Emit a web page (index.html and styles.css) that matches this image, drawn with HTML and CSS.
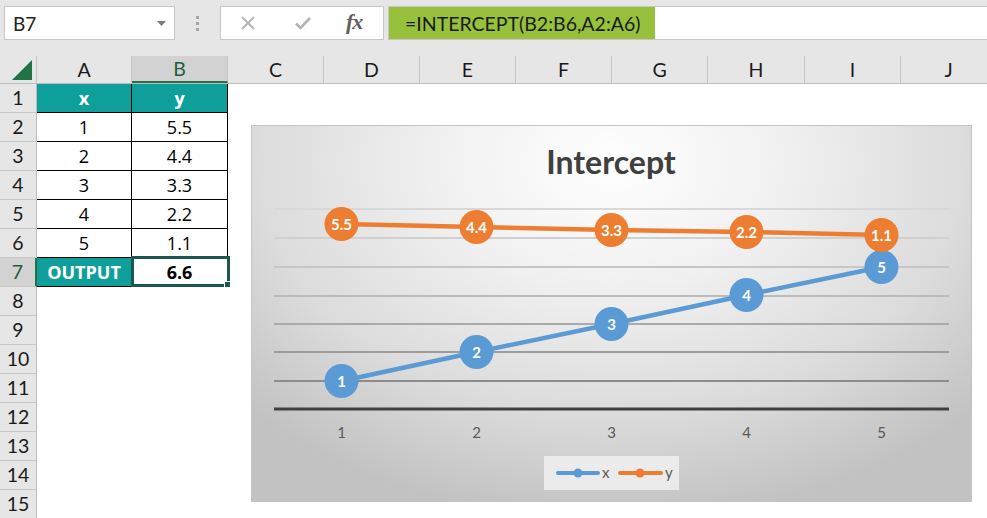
FILE: index.html
```html
<!DOCTYPE html>
<html>
<head>
<meta charset="utf-8">
<link rel="stylesheet" href="styles.css">
</head>
<body>
<div class="app">
  <div class="toolbar">
    <div class="namebox">
      <span class="name">B7</span>
      <svg class="dd" width="9" height="6" viewBox="0 0 9 6"><path d="M0 0H9L4.5 5Z" fill="#7a7a7a"/></svg>
    </div>
    <div class="grip"><i></i><i></i><i></i></div>
    <div class="fxbox">
      <svg class="ic" width="16" height="16" viewBox="0 0 16 16"><path d="M2 2L14 14M14 2L2 14" stroke="#b4b4b4" stroke-width="2" fill="none"/></svg>
      <svg class="ic" width="18" height="16" viewBox="0 0 18 16"><path d="M2 8.5L6.5 13L16 3" stroke="#b4b4b4" stroke-width="2.6" fill="none"/></svg>
      <span class="fx">fx</span>
    </div>
    <div class="formula"><span class="ftext">=INTERCEPT(B2:B6,A2:A6)</span></div>
  </div>

  <div class="colheads">
    <div class="corner"><span class="tri"></span></div>
    <div class="ch wa">A</div>
    <div class="ch sel">B</div>
    <div class="ch">C</div>
    <div class="ch">D</div>
    <div class="ch">E</div>
    <div class="ch">F</div>
    <div class="ch">G</div>
    <div class="ch wh">H</div>
    <div class="ch">I</div>
    <div class="ch">J</div>
  </div>

  <div class="rows">
    <div class="row"><div class="rh">1</div><div class="cell ca head">x</div><div class="cell cb head">y</div></div>
    <div class="row"><div class="rh">2</div><div class="cell ca">1</div><div class="cell cb">5.5</div></div>
    <div class="row"><div class="rh">3</div><div class="cell ca">2</div><div class="cell cb">4.4</div></div>
    <div class="row"><div class="rh">4</div><div class="cell ca">3</div><div class="cell cb">3.3</div></div>
    <div class="row"><div class="rh">5</div><div class="cell ca">4</div><div class="cell cb">2.2</div></div>
    <div class="row"><div class="rh">6</div><div class="cell ca">5</div><div class="cell cb">1.1</div></div>
    <div class="row"><div class="rh selr">7</div><div class="cell ca head">OUTPUT</div><div class="cell cb active">6.6</div></div>
    <div class="row"><div class="rh">8</div></div>
    <div class="row"><div class="rh">9</div></div>
    <div class="row"><div class="rh">10</div></div>
    <div class="row"><div class="rh">11</div></div>
    <div class="row"><div class="rh">12</div></div>
    <div class="row"><div class="rh">13</div></div>
    <div class="row"><div class="rh">14</div></div>
    <div class="row"><div class="rh">15</div></div>
  </div>

  <div class="chart">
    <svg width="721" height="377" viewBox="0 0 721 377">
      <text class="title" x="360" y="49" text-anchor="middle">Intercept</text>
      <g stroke-width="2">
        <line x1="23" x2="698" y1="84" y2="84" stroke="#d8d8d8"/>
        <line x1="23" x2="698" y1="113" y2="113" stroke="#d0d0d0"/>
        <line x1="23" x2="698" y1="142" y2="142" stroke="#c6c6c6"/>
        <line x1="23" x2="698" y1="171" y2="171" stroke="#bbbbbb"/>
        <line x1="23" x2="698" y1="199" y2="199" stroke="#aaaaaa"/>
        <line x1="23" x2="698" y1="227" y2="227" stroke="#9c9c9c"/>
        <line x1="23" x2="698" y1="256" y2="256" stroke="#8c8c8c"/>
      </g>
      <line x1="23" x2="698" y1="284" y2="284" stroke="#404040" stroke-width="3"/>
      <polyline points="90.5,256 225.5,227 360.5,199 495.5,170 630.5,142" fill="none" stroke="#5b9bd5" stroke-width="4.5"/>
      <polyline points="90.5,99 225.5,102 360.5,105 495.5,107 630.5,110" fill="none" stroke="#ed7d31" stroke-width="4.5"/>
      <g fill="#5b9bd5">
        <circle cx="90.5" cy="256" r="17"/>
        <circle cx="225.5" cy="227" r="17"/>
        <circle cx="360.5" cy="199" r="17"/>
        <circle cx="495.5" cy="170" r="17"/>
        <circle cx="630.5" cy="142" r="17"/>
      </g>
      <g fill="#ed7d31">
        <circle cx="90.5" cy="99" r="17"/>
        <circle cx="225.5" cy="102" r="17"/>
        <circle cx="360.5" cy="105" r="17"/>
        <circle cx="495.5" cy="107" r="17"/>
        <circle cx="630.5" cy="110" r="17"/>
      </g>
      <g class="dl" text-anchor="middle">
        <text x="90.5" y="261.5">1</text>
        <text x="225.5" y="232.5">2</text>
        <text x="360.5" y="204.5">3</text>
        <text x="495.5" y="175.5">4</text>
        <text x="630.5" y="147.5">5</text>
        <text x="90.5" y="104.5">5.5</text>
        <text x="225.5" y="107.5">4.4</text>
        <text x="360.5" y="110.5">3.3</text>
        <text x="495.5" y="112.5">2.2</text>
        <text x="630.5" y="115.5">1.1</text>
      </g>
      <g class="cat" text-anchor="middle">
        <text x="90.5" y="313">1</text>
        <text x="225.5" y="313">2</text>
        <text x="360.5" y="313">3</text>
        <text x="495.5" y="313">4</text>
        <text x="630.5" y="313">5</text>
      </g>
      <rect x="293" y="331" width="135" height="34" fill="#f2f2f2" opacity="0.8"/>
      <line x1="307" x2="347" y1="348" y2="348" stroke="#5b9bd5" stroke-width="4" stroke-linecap="round"/>
      <circle cx="327" cy="348" r="4.5" fill="#5b9bd5"/>
      <text class="leg" x="351" y="353">x</text>
      <line x1="369" x2="410" y1="348" y2="348" stroke="#ed7d31" stroke-width="4" stroke-linecap="round"/>
      <circle cx="389" cy="348" r="4.5" fill="#ed7d31"/>
      <text class="leg" x="414" y="353">y</text>
    </svg>
  </div>
</div>
</body>
</html>
```

FILE: styles.css
```css
* { box-sizing: border-box; }
html, body { margin: 0; padding: 0; }
body { background: #ffffff; width: 987px; height: 518px; overflow: hidden; font-family: "Lato", "Open Sans", sans-serif; }
.app { position: relative; width: 987px; height: 518px; overflow: hidden; }

.toolbar { height: 56px; background: #e6e6e6; display: flex; align-items: flex-start; padding-top: 6px; }
.toolbar > * { flex: none; }
.namebox { margin-left: 4px; width: 171px; height: 34px; background: #fff; border: 1px solid #c6c6c6; display: flex; align-items: center; justify-content: space-between; padding: 0 8px 0 8px; }
.name { font-size: 19px; color: #222; }
.dd { margin-top: 1px; }
.grip { width: 45px; height: 34px; display: flex; flex-direction: column; align-items: center; justify-content: center; gap: 3px; }
.grip i { display: block; width: 3px; height: 3px; background: #a6a6a6; }
.fxbox { width: 164px; height: 34px; background: #fff; border: 1px solid #c6c6c6; display: flex; align-items: center; padding-left: 19px; }
.fxbox .ic:nth-child(1) { margin-right: 38px; }
.fxbox .ic:nth-child(2) { margin-right: 34px; }
.fx { font-family: "Liberation Serif", serif; font-style: italic; font-weight: 700; font-size: 22px; color: #5f5f5f; margin-top: -3px; letter-spacing: -1px; }
.formula.formula { flex: 1 1 auto; margin-left: 4px; height: 34px; background: #fff; border: 1px solid #c6c6c6; border-right: none; display: flex; }
.ftext { background: #97c03d; width: 266px; height: 32px; display: flex; align-items: center; padding-left: 16px; font-size: 19.5px; color: #1a1a1a; }

.colheads { display: flex; height: 28px; background: #e6e6e6; border-bottom: 1px solid #bdbdbd; }
.colheads > * { flex: none; }
.corner { width: 37px; border-right: 1px solid #c6c6c6; position: relative; }
.tri { position: absolute; left: 12px; top: 4px; width: 0; height: 0; border-style: solid; border-width: 0 0 20px 20px; border-color: transparent transparent #217346 transparent; }
.ch { width: 96px; border-right: 1px solid #c6c6c6; text-align: center; font-size: 19.5px; line-height: 27px; color: #1a1a1a; }
.ch.wa { width: 95px; }
.ch.wh { width: 97px; }
.ch.sel { background: #d2d2d2; border-bottom: 2px solid #217346; color: #1e5e3e; line-height: 26px; }

.rows { display: flex; flex-direction: column; }
.row { display: flex; height: 29px; }
.row > * { flex: none; }
.rh { width: 37px; background: #e6e6e6; border-right: 1px solid #bdbdbd; border-bottom: 1px solid #c8c8c8; text-align: center; font-size: 19.5px; line-height: 28px; color: #1a1a1a; }
.rh.selr { background: #d2d2d2; color: #1e5e3e; border-right: 2px solid #217346; }
.cell { border-right: 1px solid #000; border-bottom: 1px solid #000; text-align: center; font-family: "Open Sans", sans-serif; font-size: 18px; line-height: 28px; color: #000; background: #fff; }
.cell.ca { width: 95px; }
.cell.cb { width: 96px; }
.cell.head { background: #0f9f9b; color: #fff; font-weight: 700; }
.cell.active { position: relative; font-weight: 700; }
.cell.active::after { content: ""; position: absolute; left: -1px; top: -2px; right: -3px; bottom: -1px; border: 3px solid #1d5751; }
.cell.active::before { content: ""; position: absolute; right: -4px; bottom: -2px; width: 5px; height: 5px; background: #1d5751; border: 1px solid #fff; z-index: 2; }

.chart { position: absolute; left: 251px; top: 125px; width: 721px; height: 377px; border: 1px solid #c4c4c4; background: radial-gradient(ellipse 70% 95% at 50% 10%, #ffffff 0%, #f0f0f0 35%, #dcdcdc 70%, #c2c2c2 100%); }
.chart svg { position: absolute; left: -1px; top: -1px; }
.title { font-family: "Lato", sans-serif; font-weight: 700; font-size: 32px; fill: #404040; }
.dl text { font-family: "Lato", sans-serif; font-weight: 700; font-size: 15px; fill: #fff; }
.cat text { font-family: "Lato", sans-serif; font-size: 15px; fill: #595959; }
.leg { font-family: "Lato", sans-serif; font-size: 15px; fill: #595959; }
```
